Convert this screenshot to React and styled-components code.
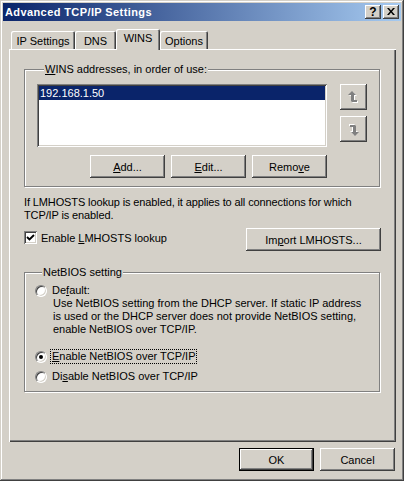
import React from 'react'
import styled, { createGlobalStyle } from 'styled-components'

const FACE = '#D4D0C8'
const raised = `
  box-shadow: inset -1px -1px #404040, inset 1px 1px #ffffff,
    inset -2px -2px #808080, inset 2px 2px ${FACE};
`

const Global = createGlobalStyle`
  * { box-sizing: border-box; }
  body {
    margin: 0;
    background: ${FACE};
    font-family: "Liberation Sans", Arial, sans-serif;
    font-size: 11px;
    color: #000;
  }
`

const Window = styled.div`
  width: 404px;
  height: 481px;
  padding: 3px;
  background: ${FACE};
  box-shadow: inset -1px -1px #404040, inset 1px 1px ${FACE},
    inset -2px -2px #808080, inset 2px 2px #ffffff;
  display: flex;
  flex-direction: column;
`

const TitleBar = styled.div`
  height: 18px;
  display: flex;
  align-items: center;
  padding: 0 2px;
  background: linear-gradient(to right, #0a246a, #a6caf0);
  color: #fff;
  font-weight: bold;
  font-size: 11px;
`

const TitleText = styled.span`
  flex: 1;
  white-space: nowrap;
  letter-spacing: 0.4px;
`

const TitleButtons = styled.div`
  display: flex;
  gap: 2px;
`

const CaptionButton = styled.div`
  width: 16px;
  height: 14px;
  background: ${FACE};
  ${raised}
  color: #000;
  display: flex;
  align-items: center;
  justify-content: center;
  font-size: 12px;
  font-weight: bold;
  line-height: 14px;
  padding-bottom: 1px;
`

const Body = styled.div`
  flex: 1;
  display: flex;
  flex-direction: column;
  padding: 8px 5px 0 6px;
`

const TabRow = styled.div`
  height: 20px;
  display: flex;
  align-items: flex-end;
  padding-left: 2px;
`

const Tab = styled.div`
  position: relative;
  width: ${(p) => p.$w}px;
  height: ${(p) => (p.$active ? 21 : 18)}px;
  margin-bottom: ${(p) => (p.$active ? -1 : 0)}px;
  z-index: ${(p) => (p.$active ? 1 : 0)};
  background: ${FACE};
  border-radius: 2px 2px 0 0;
  box-shadow: inset 1px 1px #ffffff, inset -1px 0 #404040, inset -2px 0 #808080;
  display: flex;
  align-items: ${(p) => (p.$active ? 'flex-start' : 'center')};
  padding-top: ${(p) => (p.$active ? 3 : 1)}px;
  justify-content: center;
  white-space: nowrap;
`

const Panel = styled.div`
  height: 393px;
  background: ${FACE};
  box-shadow: inset 1px 1px #ffffff, inset -1px -1px #404040, inset -2px -2px #808080;
  padding: 14px 16px 0 15px;
  display: flex;
  flex-direction: column;
`

const Group = styled.fieldset`
  margin: ${(p) => p.$top || 0}px 0 0 0;
  padding: ${(p) => p.$pad};
  border: 1px solid #808080;
  box-shadow: inset 1px 1px #ffffff, 1px 1px #ffffff;
  min-width: 0;
`

const Legend = styled.legend`
  margin-left: 7px;
  padding: 0 1px;
  line-height: 13px;
  background: ${FACE};
`

const Key = styled.span`
  text-decoration: underline;
`

const WinsLayout = styled.div`
  display: grid;
  grid-template-columns: 290px 27px;
  column-gap: 13px;
  row-gap: 8px;
`

const ListBox = styled.div`
  height: 63px;
  background: #fff;
  padding: 2px;
  box-shadow: inset 1px 1px #808080, inset -1px -1px #ffffff,
    inset 2px 2px #404040, inset -2px -2px ${FACE};
`

const ListItem = styled.div`
  height: 14px;
  line-height: 14px;
  padding-left: 1px;
  background: ${(p) => (p.$selected ? '#0a246a' : 'transparent')};
  color: ${(p) => (p.$selected ? '#fff' : '#000')};
`

const ArrowColumn = styled.div`
  display: flex;
  flex-direction: column;
  gap: 6px;
`

const ArrowButton = styled.div`
  width: 27px;
  height: 26px;
  background: ${FACE};
  ${raised}
  display: flex;
  align-items: center;
  justify-content: center;
`

const ButtonRow = styled.div`
  display: flex;
  justify-content: flex-end;
  gap: 6px;
`

const Button = styled.div`
  width: ${(p) => p.$w || 75}px;
  height: 23px;
  background: ${FACE};
  ${(p) =>
    p.$default
      ? `border: 1px solid #000;
         box-shadow: inset -1px -1px #404040, inset 1px 1px #ffffff, inset -2px -2px #808080;`
      : raised}
  display: flex;
  align-items: center;
  justify-content: center;
  white-space: nowrap;
`

const Note = styled.p`
  margin: 9px 0 0 0;
  line-height: 13px;
  letter-spacing: -0.12px;
`

const LmRow = styled.div`
  margin-top: 6px;
  display: flex;
  align-items: flex-start;
  justify-content: space-between;
  margin-right: -1px;
`

const CheckLabel = styled.label`
  display: flex;
  align-items: center;
  gap: 4px;
  padding-top: 2px;
  line-height: 13px;
`

const CheckBox = styled.span`
  width: 13px;
  height: 13px;
  background: #fff;
  box-shadow: inset 1px 1px #808080, inset -1px -1px #ffffff,
    inset 2px 2px #404040, inset -2px -2px ${FACE};
  display: flex;
  align-items: center;
  justify-content: center;
`

const LabelText = styled.span`
  padding-top: 2px;
`

const RadioRow = styled.div`
  display: flex;
  align-items: center;
  gap: 5px;
  height: 13px;
  margin-top: ${(p) => p.$top || 0}px;
`

const Radio = styled.span`
  position: relative;
  flex: none;
  width: 12px;
  height: 12px;
  border-radius: 50%;
  background: #fff;
  border: 1px solid;
  border-color: #808080 #ffffff #ffffff #808080;
  box-shadow: inset 1px 1px #404040, inset -1px -1px ${FACE};
  &::after {
    content: '';
    display: ${(p) => (p.$checked ? 'block' : 'none')};
    position: absolute;
    left: 3px;
    top: 3px;
    width: 4px;
    height: 4px;
    border-radius: 50%;
    background: #000;
  }
`

const RadioText = styled.span`
  line-height: 13px;
  padding: 0 1px;
  margin-left: -1px;
  outline: ${(p) => (p.$focus ? '1px dotted #000' : 'none')};
  outline-offset: 0;
`

const Description = styled.p`
  margin: 0;
  padding-left: 18px;
  line-height: 13px;
`

const Footer = styled.div`
  margin-top: 6px;
  display: flex;
  justify-content: flex-end;
  gap: 6px;
  padding-right: 1px;
`

const UpArrow = ({ flip }) => (
  <svg width="11" height="13" viewBox="0 0 11 13" style={flip ? { transform: 'rotate(180deg)' } : undefined}>
    <polygon transform="translate(1 1)" fill="#fff" points="4,0 8,4 6,4 6,9 9,9 9,11 4,11 3,10 3,4 0,4" />
    <polygon fill="#808080" points="4,0 8,4 6,4 6,9 9,9 9,11 4,11 3,10 3,4 0,4" />
  </svg>
)

const CloseGlyph = () => (
  <svg width="8" height="7" viewBox="0 0 8 7">
    <path d="M0 0h2l2 2.5L6 0h2L5 3.5 8 7H6L4 4.5 2 7H0l3-3.5z" fill="#000" />
  </svg>
)

const Check = () => (
  <svg width="9" height="9" viewBox="0 0 9 9">
    <polyline points="1,4 3.5,6.5 8,2" fill="none" stroke="#000" strokeWidth="1.9" />
  </svg>
)

export default function App() {
  return (
    <>
      <Global />
      <Window>
        <TitleBar>
          <TitleText>Advanced TCP/IP Settings</TitleText>
          <TitleButtons>
            <CaptionButton>?</CaptionButton>
            <CaptionButton>
              <CloseGlyph />
            </CaptionButton>
          </TitleButtons>
        </TitleBar>
        <Body>
          <TabRow>
            <Tab $w={64}>IP Settings</Tab>
            <Tab $w={41}>DNS</Tab>
            <Tab $w={44} $active>
              WINS
            </Tab>
            <Tab $w={48}>Options</Tab>
          </TabRow>
          <Panel>
            <Group $pad="8px 12px 8px 12px">
              <Legend>
                <Key>W</Key>INS addresses, in order of use:
              </Legend>
              <WinsLayout>
                <ListBox>
                  <ListItem $selected>192.168.1.50</ListItem>
                </ListBox>
                <ArrowColumn>
                  <ArrowButton>
                    <UpArrow />
                  </ArrowButton>
                  <ArrowButton>
                    <UpArrow flip />
                  </ArrowButton>
                </ArrowColumn>
                <ButtonRow>
                  <Button>
                    <Key>A</Key>dd...
                  </Button>
                  <Button>
                    <Key>E</Key>dit...
                  </Button>
                  <Button>
                    Remo<Key>v</Key>e
                  </Button>
                </ButtonRow>
              </WinsLayout>
            </Group>
            <Note>
              If LMHOSTS lookup is enabled, it applies to all connections for which
              <br />
              TCP/IP is enabled.
            </Note>
            <LmRow>
              <CheckLabel>
                <CheckBox>
                  <Check />
                </CheckBox>
                <LabelText>
                  Enable <Key>L</Key>MHOSTS lookup
                </LabelText>
              </CheckLabel>
              <Button $w={135}>
                Im<Key>p</Key>ort LMHOSTS...
              </Button>
            </LmRow>
            <Group $top={15} $pad="5px 10px 8px 10px">
              <Legend>NetBIOS setting</Legend>
              <RadioRow>
                <Radio />
                <RadioText>
                  De<Key>f</Key>ault:
                </RadioText>
              </RadioRow>
              <Description>
                Use NetBIOS setting from the DHCP server. If static IP address
                <br />
                is used or the DHCP server does not provide NetBIOS setting,
                <br />
                enable NetBIOS over TCP/IP.
              </Description>
              <RadioRow $top={14}>
                <Radio $checked />
                <RadioText $focus>
                  <Key>E</Key>nable NetBIOS over TCP/IP
                </RadioText>
              </RadioRow>
              <RadioRow $top={7}>
                <Radio />
                <RadioText>
                  Di<Key>s</Key>able NetBIOS over TCP/IP
                </RadioText>
              </RadioRow>
            </Group>
          </Panel>
          <Footer>
            <Button $default>OK</Button>
            <Button>Cancel</Button>
          </Footer>
        </Body>
      </Window>
    </>
  )
}
